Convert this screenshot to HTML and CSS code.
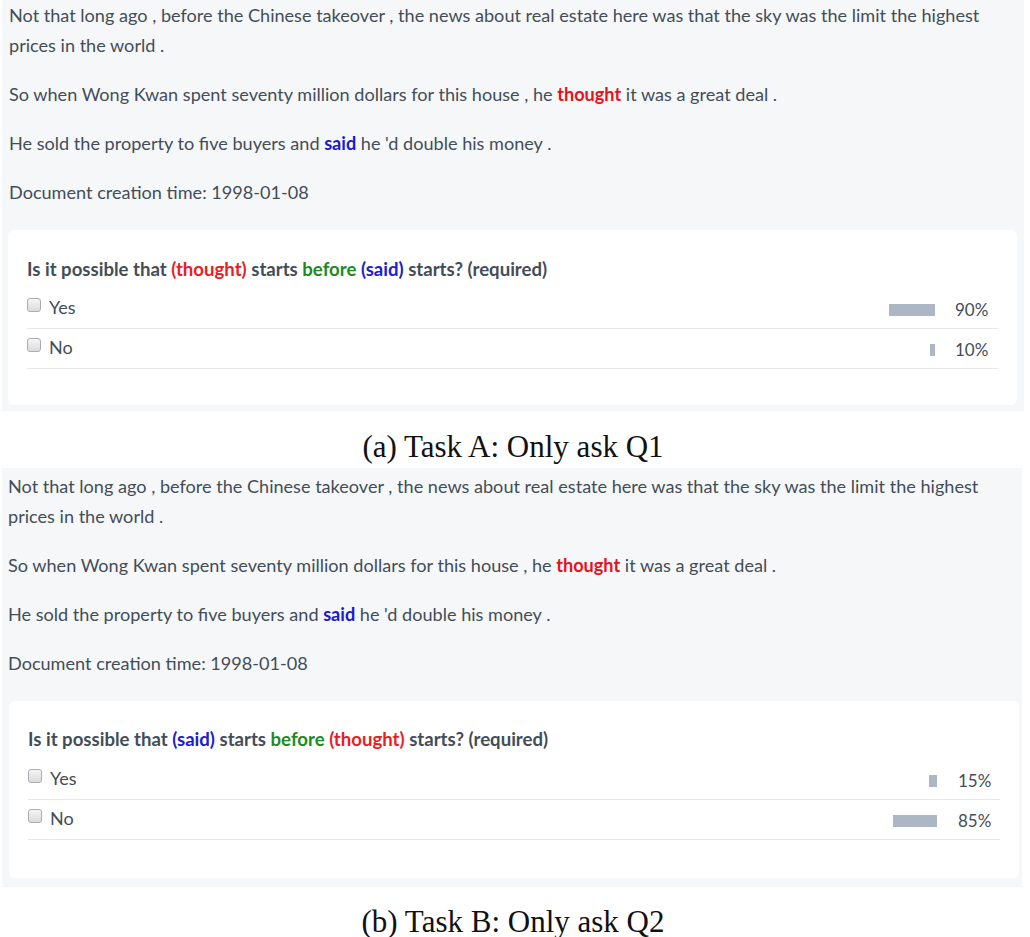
FILE: index.html
```html
<!DOCTYPE html>
<html>
<head>
<meta charset="utf-8">
<link rel="stylesheet" href="styles.css">
</head>
<body>
<div class="figure fig-a">
  <div class="panel">
    <p class="para">Not that long ago , before the Chinese takeover , the news about real estate here was that the sky was the limit the highest prices in the world .</p>
    <p class="para">So when Wong Kwan spent seventy million dollars for this house , he <b class="ev-red">thought</b> it was a great deal .</p>
    <p class="para">He sold the property to five buyers and <b class="ev-blue">said</b> he 'd double his money .</p>
    <p class="para">Document creation time: 1998-01-08</p>
    <div class="card">
      <div class="question">Is it possible that <span class="red">(thought)</span> starts <span class="green">before</span> <span class="blue">(said)</span> starts? (required)</div>
      <div class="option">
        <span class="box"></span><span class="label">Yes</span>
        <span class="bar-wrap"><span class="bar" style="width:46px"></span></span>
        <span class="pct">90%</span>
      </div>
      <div class="option">
        <span class="box"></span><span class="label">No</span>
        <span class="bar-wrap"><span class="bar" style="width:5px"></span></span>
        <span class="pct">10%</span>
      </div>
    </div>
  </div>
  <div class="caption">(a) Task A: Only ask Q1</div>
</div>
<div class="figure fig-b">
  <div class="panel">
    <p class="para">Not that long ago , before the Chinese takeover , the news about real estate here was that the sky was the limit the highest prices in the world .</p>
    <p class="para">So when Wong Kwan spent seventy million dollars for this house , he <b class="ev-red">thought</b> it was a great deal .</p>
    <p class="para">He sold the property to five buyers and <b class="ev-blue">said</b> he 'd double his money .</p>
    <p class="para">Document creation time: 1998-01-08</p>
    <div class="card">
      <div class="question">Is it possible that <span class="blue">(said)</span> starts <span class="green">before</span> <span class="red">(thought)</span> starts? (required)</div>
      <div class="option">
        <span class="box"></span><span class="label">Yes</span>
        <span class="bar-wrap"><span class="bar" style="width:8px"></span></span>
        <span class="pct">15%</span>
      </div>
      <div class="option">
        <span class="box"></span><span class="label">No</span>
        <span class="bar-wrap"><span class="bar" style="width:44px"></span></span>
        <span class="pct">85%</span>
      </div>
    </div>
  </div>
  <div class="caption">(b) Task B: Only ask Q2</div>
</div>
</body>
</html>
```

FILE: styles.css
```css
html, body {
  margin: 0;
  padding: 0;
  background: #ffffff;
}
body {
  font-family: Lato, "Noto Sans", sans-serif;
  color: #434d58;
  width: 1030px;
}
.figure {
  display: flex;
  flex-direction: column;
}
.panel {
  background: #f5f7f9;
  margin-left: 2px;
  width: 1022px;
  padding: 0 7px 6px 7px;
  box-sizing: border-box;
  font-size: 18.1px;
}
.fig-b .panel {
  width: 1020px;
  padding-top: 3px;
  padding-left: 6px;
  padding-right: 3px;
  padding-bottom: 9px;
}
.para {
  margin: 0 0 19px 0;
  line-height: 30px;
}
.para:nth-of-type(4) {
  margin-bottom: 23px;
}
.ev-red { color: #e8121a; }
.ev-blue { color: #1a1ad0; }
.red { color: #ea1c24; }
.blue { color: #2020c8; }
.green { color: #1e8a1e; }
.card {
  background: #ffffff;
  border-radius: 6px;
  margin-left: -1px;
  padding: 26px 19px 36px 19px;
}
.fig-b .card {
  margin-left: 1px;
  margin-right: 0;
  padding-top: 25px;
  padding-bottom: 38px;
}
.question {
  font-weight: bold;
  font-size: 18.6px;
  line-height: 26px;
  margin-bottom: 7px;
}
.fig-b .question {
  margin-bottom: 8px;
}
.option {
  display: flex;
  align-items: center;
  height: 39px;
  border-bottom: 1px solid #e6e8eb;
  font-size: 18px;
}
.option .label {
  margin-top: -3px;
}
.box {
  width: 12px;
  height: 12px;
  border: 1px solid #a9adb2;
  border-radius: 3px;
  background: linear-gradient(#f4f4f4, #dcdcdc);
  margin-right: 8px;
  margin-top: -7px;
}
.label {
  flex: 1;
}
.bar-wrap {
  width: 52px;
  display: flex;
  justify-content: flex-end;
  margin-right: 20px;
  margin-top: 2px;
}
.bar {
  display: block;
  height: 12px;
  background: #adb6c4;
}
.pct {
  width: 43px;
  margin-top: 2px;
  font-size: 17px;
}
.fig-b .bar-wrap { margin-right: 21px; }
.fig-b .pct { width: 42px; }
.caption {
  font-family: "Liberation Serif", "Times New Roman", serif;
  font-size: 31px;
  color: #111;
  text-align: center;
  height: 57px;
  line-height: 36px;
  padding-top: 18px;
  box-sizing: border-box;
  padding-right: 4px;
}
.fig-b .caption {
  height: 52px;
  padding-top: 17px;
}
```
